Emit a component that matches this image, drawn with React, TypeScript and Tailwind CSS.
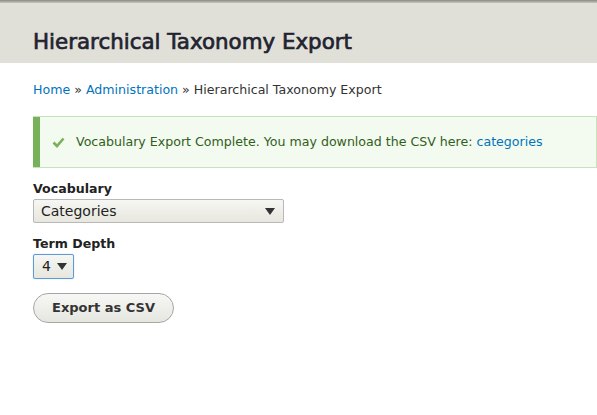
const font = { fontFamily: '"DejaVu Sans", "Noto Sans", sans-serif' };

const Caret = () => (
  <svg width="10" height="7" viewBox="0 0 10 7" className="shrink-0">
    <path d="M0 0h10L5 7z" fill="#333" />
  </svg>
);

export default function App() {
  return (
    <div className="min-h-[415px] w-full bg-white text-[12.6px] text-[#222]" style={font}>
      <div className="h-[3px] bg-gradient-to-b from-[#8a8a86] to-[#c8c8c2]" />
      <div className="h-[60px] bg-[#e0e0d8] px-[33px] pt-[28px]">
        <h1 className="text-[21.4px] font-normal leading-none text-[#222330] [-webkit-text-stroke:0.7px_#222330]">
          Hierarchical Taxonomy Export
        </h1>
      </div>

      <div className="px-[33px]">
        <nav className="mt-[18px] leading-[18px] text-[#333]">
          <a className="text-[#0074bd]">Home</a> »{" "}
          <a className="text-[#0074bd]">Administration</a> » Hierarchical Taxonomy Export
        </nav>

        <div className="-mr-[33px] mt-[17px] flex h-[52px] items-center gap-[11px] border border-l-0 border-[#c9e1bd] bg-[#f3faef] pl-[19px] text-[#325e1c] shadow-[inset_7px_0_0_#77b259]">
          <svg width="13" height="11" viewBox="0 0 13 11">
            <path d="M1.5 5.5l3.5 3.5 6.5-7.5" fill="none" stroke="#77b259" strokeWidth="2.6" />
          </svg>
          <span>
            Vocabulary Export Complete. You may download the CSV here:{" "}
            <a className="text-[#0074bd]">categories</a>
          </span>
        </div>

        <label className="mt-[12px] block font-bold leading-[18px]">Vocabulary</label>
        <div className="mt-[1px] flex h-[24px] w-[251px] items-center justify-between rounded-[2px] border border-[#b8b8b8] bg-gradient-to-b from-[#f6f6f3] to-[#e7e7df] pl-[7px] pr-[8px] text-[14px]">
          <span>Categories</span>
          <Caret />
        </div>

        <label className="mt-[12px] block font-bold leading-[18px]">Term Depth</label>
        <div className="mt-[1px] flex h-[25px] w-[41px] items-center justify-between rounded-[2px] border border-[#5d9bd6] bg-gradient-to-b from-[#f6f6f3] to-[#e7e7df] pl-[8px] pr-[6px] text-[14px] shadow-[0_0_1px_#8ab6e6]">
          <span>4</span>
          <Caret />
        </div>

        <button className="mt-[14px] h-[30px] w-[141px] rounded-full border border-[#a6a6a6] bg-gradient-to-b from-[#f7f7f5] to-[#e6e6e1] text-[13px] font-bold text-[#333]">
          Export as CSV
        </button>
      </div>
    </div>
  );
}
